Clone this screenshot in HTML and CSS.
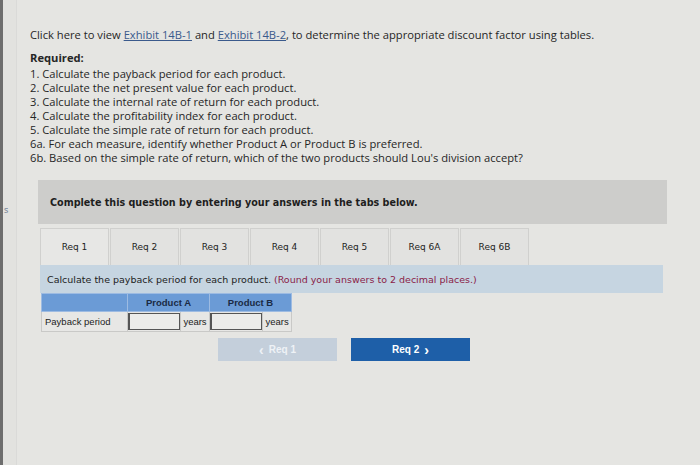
FILE: index.html
```html
<!DOCTYPE html>
<html>
<head>
<meta charset="utf-8">
<link rel="stylesheet" href="styles.css">
</head>
<body>
<div class="page">
  <div class="side"><span class="side-text">s</span></div>
  <div class="main">
    <p class="intro">Click here to view <a class="link">Exhibit 14B-1</a> and <a class="link">Exhibit 14B-2</a>, to determine the appropriate discount factor using tables.</p>
    <div class="req">
      <div class="req-title">Required:</div>
      <div>1. Calculate the payback period for each product.</div>
      <div>2. Calculate the net present value for each product.</div>
      <div>3. Calculate the internal rate of return for each product.</div>
      <div>4. Calculate the profitability index for each product.</div>
      <div>5. Calculate the simple rate of return for each product.</div>
      <div>6a. For each measure, identify whether Product A or Product B is preferred.</div>
      <div>6b. Based on the simple rate of return, which of the two products should Lou's division accept?</div>
    </div>
    <div class="banner">Complete this question by entering your answers in the tabs below.</div>
    <div class="tabs">
      <div class="tab active">Req 1</div>
      <div class="tab">Req 2</div>
      <div class="tab">Req 3</div>
      <div class="tab">Req 4</div>
      <div class="tab">Req 5</div>
      <div class="tab">Req 6A</div>
      <div class="tab">Req 6B</div>
    </div>
    <div class="instr">Calculate the payback period for each product. <span class="note">(Round your answers to 2 decimal places.)</span></div>
    <table class="grid">
      <colgroup><col class="c-lbl"><col class="c-inp"><col class="c-unit"><col class="c-inp"><col class="c-unit"></colgroup>
      <tr class="head"><th></th><th colspan="2">Product A</th><th colspan="2">Product B</th></tr>
      <tr class="row">
        <td class="lbl">Payback period</td>
        <td class="inp"><div class="box"></div></td><td class="unit">years</td>
        <td class="inp"><div class="box"></div></td><td class="unit">years</td>
      </tr>
    </table>
    <div class="nav">
      <div class="btn prev"><span class="chev">&lsaquo;</span> Req 1</div>
      <div class="btn next">Req 2 <span class="chev">&rsaquo;</span></div>
    </div>
  </div>
</div>
</body>
</html>
```
FILE: styles.css
```css
html, body { margin: 0; padding: 0; }
body {
  width: 700px; height: 465px; overflow: hidden;
  background: #e5e5e2;
  font-family: "Open Sans", "Liberation Sans", sans-serif;
  color: #262626;
}
.page { display: flex; height: 465px; }
.side {
  width: 13px; flex: none;
  border-left: 3px solid #6d6d6d;
  border-right: 1px solid #dadad8;
  background: #e2e2df;
  display: flex; flex-direction: column; align-items: flex-start;
}
.side-text { margin-top: 203px; margin-left: 1px; font-size: 9px; color: #6a7890; }
.main { flex: 1; padding-left: 13px; padding-top: 27px; }
.intro { margin: 0; font-size: 11.2px; line-height: 16px; }
.link { color: #3a5a8c; text-decoration: underline; }
.req { margin-top: 8px; font-size: 11.2px; line-height: 14px; }
.req-title { font-weight: 700; margin-bottom: 2px; }
.banner {
  margin-top: 15px; margin-left: 8px; width: 629px; height: 44px;
  background: #cdcdcb;
  font-family: "DejaVu Sans", Verdana, sans-serif; font-weight: 700; font-size: 9.6px;
  padding-left: 12px; box-sizing: border-box;
  display: flex; align-items: center;
  color: #1e1e1e;
}
.tabs { display: flex; margin-top: 4px; margin-left: 10px; gap: 1px; }
.tab {
  width: 69px; height: 37px; box-sizing: border-box;
  border: 1px solid #d0d0ce; border-bottom: none;
  background: #e2e2e0;
  font-family: "DejaVu Sans", Verdana, sans-serif; font-size: 9px; color: #222;
  display: flex; align-items: center; justify-content: center;
}
.tab.active { background: #e7e7e5; }
.instr {
  margin-left: 10px; width: 623px; height: 28px; box-sizing: border-box;
  background: #c6d5e1; padding-left: 7px;
  font-family: "DejaVu Sans", Verdana, sans-serif; font-size: 9.5px; color: #222;
  display: flex; align-items: center; white-space: pre;
}
.note { color: #8a2248; }
.grid {
  margin-left: 11px; border-collapse: collapse; table-layout: fixed; width: 251px;
  font-family: "Liberation Sans", Arial, sans-serif; font-size: 9.5px;
}
.c-lbl { width: 86px; }
.c-inp { width: 53px; }
.c-unit { width: 29px; }
.grid th {
  background: #6b9bd6; color: #1a2a44; font-weight: 700; height: 18px; padding: 0;
  border: 1px solid #9dbbe2; box-sizing: border-box;
}
.grid td { padding: 0; height: 19px; background: #e7e7e5; border: 1px solid #c9c9c7; box-sizing: border-box; }
.grid .lbl { padding-left: 3px; text-align: left; color: #222; }
.grid .inp { padding: 1px 0; }
.grid .box { height: 15px; border: 1px solid #555; border-left-width: 2px; background: #ececea; }
.grid .unit { text-align: center; color: #222; }
.nav { display: flex; margin-top: 6px; margin-left: 188px; gap: 14px; }
.btn {
  width: 119px; height: 23px;
  font-family: "Liberation Sans", Arial, sans-serif; font-weight: 700; font-size: 10px;
  display: flex; align-items: center; justify-content: center; gap: 5px;
  color: #fff;
}
.prev { background: #c4cfdb; color: #eef2f6; }
.next { background: #1e5fa8; }
.chev { font-size: 14px; line-height: 10px; }
```
